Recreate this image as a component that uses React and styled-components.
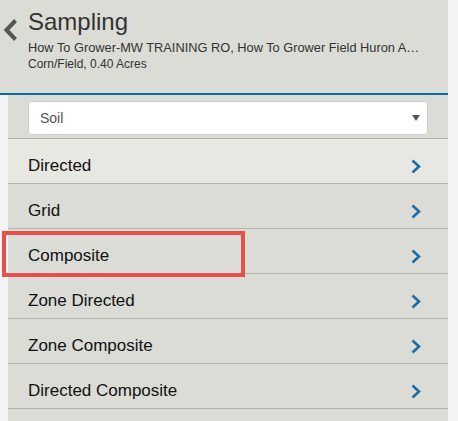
import React from 'react';
import styled, { createGlobalStyle } from 'styled-components';

const GlobalStyle = createGlobalStyle`
  html, body {
    margin: 0;
    padding: 0;
    background: #f4f4f4;
    font-family: "Liberation Sans", Arial, sans-serif;
    overflow: hidden;
  }
`;

const Page = styled.div`
  position: relative;
  width: 448px;
  height: 421px;
  overflow: hidden;
`;

const Header = styled.div`
  display: flex;
  height: 93px;
  background: #dbdcd5;
  border-bottom: 2px solid #0b6aa2;
  box-sizing: content-box;
`;

const BackButton = styled.div`
  flex: 0 0 28px;
  padding-top: 18px;
  padding-left: 3px;
  box-sizing: border-box;
`;

const HeaderText = styled.div`
  width: 394px;
  padding-top: 8px;
  overflow: hidden;
  color: #333;
`;

const Title = styled.div`
  font-size: 24px;
  line-height: 28px;
  color: #333;
`;

const SubLine = styled.div`
  width: 394px;
  font-size: ${(p) => (p.$first ? '12.8px' : '12px')};
  line-height: 17px;
  white-space: nowrap;
  overflow: hidden;
  text-overflow: ellipsis;
  margin-top: ${(p) => (p.$first ? '3px' : '0')};
`;

const Body = styled.div`
  margin-left: 8px;
  background: #dbdcd5;
`;

const SelectSection = styled.div`
  height: 44px;
  padding: 6px 20px 0 20px;
  box-sizing: border-box;
  border-bottom: 1px solid #b2b3ae;
`;

const SelectBox = styled.div`
  display: flex;
  align-items: center;
  justify-content: space-between;
  height: 32px;
  padding: 0 7px 0 11px;
  background: #fff;
  border: 1px solid #cfd0cb;
  border-radius: 3px;
  font-size: 14px;
  color: #555;
`;

const Row = styled.div`
  display: flex;
  align-items: center;
  justify-content: space-between;
  height: 35px;
  padding: 9px 27px 0 20px;
  box-sizing: content-box;
  background: ${(p) => (p.$active ? '#e8e8e2' : '#dbdcd5')};
  border-bottom: 1px solid #b2b3ae;
  font-size: 17px;
  color: #111;
`;

const Chevron = styled.svg`
  margin-top: 2px;
  flex-shrink: 0;
`;

const Highlight = styled.div`
  position: absolute;
  left: 2px;
  top: 231px;
  width: 243px;
  height: 46px;
  border: 4px solid #e94f4a;
  box-sizing: border-box;
  pointer-events: none;
`;

const RightChevron = () => (
  <Chevron width="10" height="15" viewBox="0 0 10 15">
    <polyline points="1.5,1.5 8,7.5 1.5,13.5" fill="none" stroke="#1b6ea5" strokeWidth="2.6" />
  </Chevron>
);

const items = ['Directed', 'Grid', 'Composite', 'Zone Directed', 'Zone Composite', 'Directed Composite', ''];

const App = () => {
  return (
    <>
      <GlobalStyle />
      <Page>
        <Header>
          <BackButton>
            <svg width="15" height="24" viewBox="0 0 15 24">
              <polyline points="12.5,2.5 3.5,12 12.5,21.5" fill="none" stroke="#555" strokeWidth="4" />
            </svg>
          </BackButton>
          <HeaderText>
            <Title>Sampling</Title>
            <SubLine $first>How To Grower-MW TRAINING RO, How To Grower Field Huron Area 1</SubLine>
            <SubLine>Corn/Field, 0.40 Acres</SubLine>
          </HeaderText>
        </Header>
        <Body>
          <SelectSection>
            <SelectBox>
              <span>Soil</span>
              <svg width="8" height="6" viewBox="0 0 8 6">
                <polygon points="0,0 8,0 4,6" fill="#555" />
              </svg>
            </SelectBox>
          </SelectSection>
          {items.map((name, i) => (
            <Row key={i} $active={i === 0}>
              <span>{name}</span>
              {name && <RightChevron />}
            </Row>
          ))}
        </Body>
        <Highlight />
      </Page>
    </>
  );
};

export default App;
